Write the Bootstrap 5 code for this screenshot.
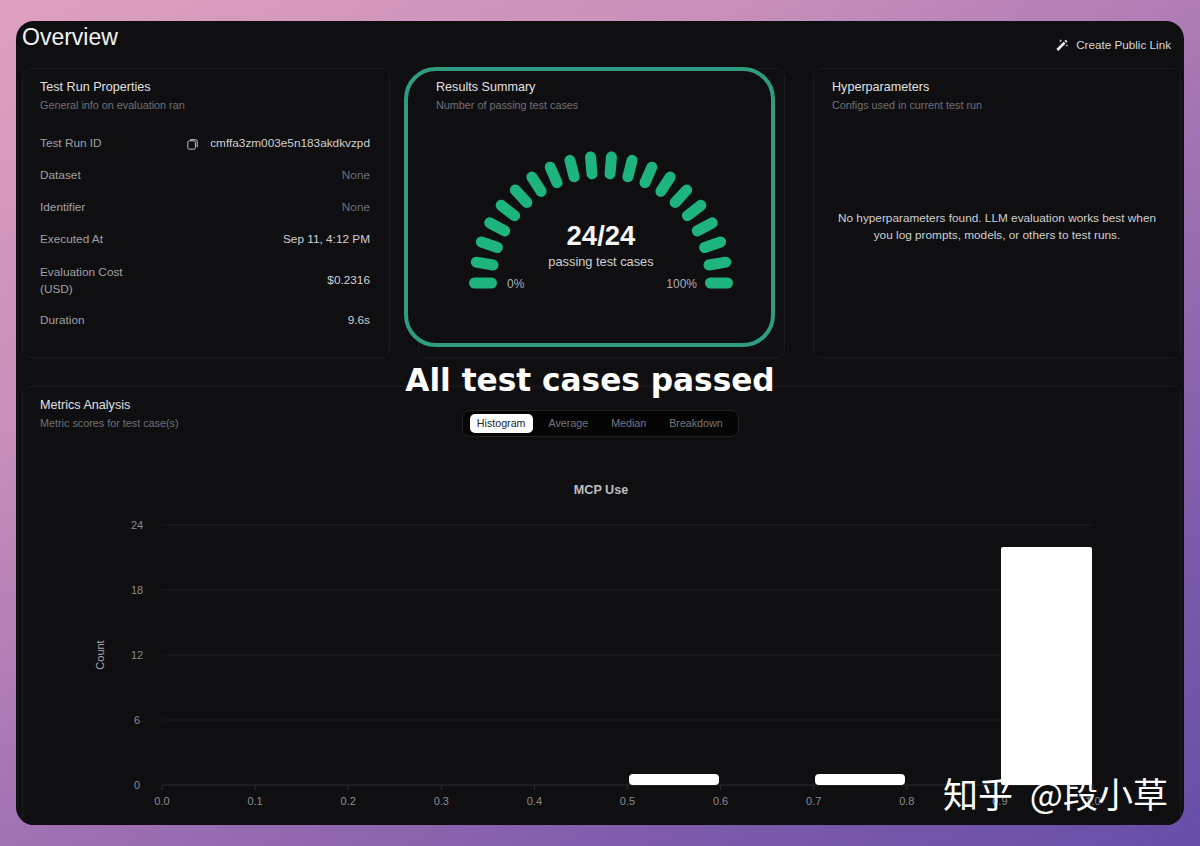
<!DOCTYPE html>
<html lang="en">

<head>
    <meta charset="UTF-8">
    <meta name="viewport" content="width=device-width, initial-scale=1.0">
    <title>Test Run Overview</title>
    <link href="https://cdn.jsdelivr.net/npm/bootstrap@5.3.2/dist/css/bootstrap.min.css" rel="stylesheet">
    <script src="https://cdn.jsdelivr.net/npm/bootstrap@5.3.2/dist/js/bootstrap.bundle.min.js"></script>
    <style>
        html, body { height: 846px; overflow: hidden; }
        body {
            background: linear-gradient(150deg, #dda0be 0%, #c88fb9 28%, #a575b3 52%, #7f5cab 78%, #664ea7 100%);
            padding: 21px 16px;
            font-family: "Liberation Sans", Arial, sans-serif;
            color: #e6e6e8;
        }
        .panel-dark {
            position: relative;
            height: 804px;
            padding: 0 3px 0 6px;
            background: #0f0f12;
            border-radius: 18px;
            overflow: hidden;
        }
        .page-head { height: 47px; }
        .page-title { font-size: 23px; line-height: 32px; color: #f2f2f3; }
        .public-link { font-size: 11.7px; color: #d8d8da; margin: 16px 10px 0 0; line-height: 16px; }
        .top-cards { display: grid; grid-template-columns: 368px 367px 368px; column-gap: 28px; height: 290px; }
        .panel-card {
            background: #0f0f12;
            border: 1px solid #1b1b1f;
            border-radius: 8px;
            padding: 10px 19px 10px 17px;
            color: #e6e6e8;
        }
        .card-name { font-size: 12.6px; line-height: 16px; color: #e0e0e2; }
        .card-sub { font-size: 10.8px; line-height: 14px; margin-top: 3px; color: #707075; }
        .prop-list { margin-top: 16px; font-size: 11.8px; }
        .prop-row { min-height: 32px; color: #a0a0a4; }
        .prop-row.tall { min-height: 49px; line-height: 17px; }
        .prop-label { max-width: 95px; }
        .prop-value { color: #cfcfd1; }
        .prop-none { color: #6d6d72; }
        .hyper-card { padding-left: 18px; padding-right: 18px; }
        .hyper-body {
            height: 230px;
            font-size: 11.8px;
            line-height: 17px;
            color: #cfcfd1;
        }
        .result-layer { position: relative; z-index: 2; }
        .result-ring {
            position: absolute;
            left: -15px;
            top: -2px;
            width: 371px;
            height: 280px;
            z-index: 1;
            background: #0f0f12;
            border: 4px solid #2f9b80;
            border-radius: 32px;
        }
        .result-caption {
            position: absolute;
            left: -15px;
            top: 289px;
            width: 372px;
            z-index: 3;
            font-family: "DejaVu Sans", sans-serif;
            font-weight: 700;
            font-size: 31.2px;
            line-height: 44px;
            white-space: nowrap;
            text-align: center;
            color: #fff;
        }
        .gauge-svg { display: block; margin: 12px auto 0; }
        .metric-card { margin-top: 28px; height: 460px; }
        .metric-head { display: grid; grid-template-columns: 1fr auto 1fr; }
        .metric-tabs {
            margin-top: 13px;
            height: 27px;
            padding: 3px 4px 3px 7px;
            background: #050506;
            border: 1px solid #202024;
            border-radius: 8px;
            font-size: 10.7px;
        }
        .metric-tab { padding: 0 11.5px; line-height: 19px; height: 19px; color: #77777c; }
        .metric-tab.on { background: #fff; color: #26262a; border-radius: 5px; padding: 0 7px; margin-right: 4.5px; }
        .chart-svg { display: block; margin: 3px 0 0 -17px; }
        .chart-svg text { font-family: "Liberation Sans", Arial, sans-serif; }
        .mark-zhihu {
            position: absolute;
            left: 927px;
            top: 748px;
            font-family: "Noto Sans CJK SC", "Liberation Sans", sans-serif;
            font-size: 35px;
            line-height: 48px;
            word-spacing: 9px;
            color: #fff;
            white-space: nowrap;
        }
    </style>
</head>

<body>
    <div class="panel-dark">
        <div class="page-head d-flex justify-content-between align-items-start">
            <div class="page-title">Overview</div>
            <div class="public-link d-flex align-items-center gap-2">
                <svg width="12" height="12" viewBox="0 0 12 12" fill="none">
                    <path d="M1.3 11 L8.6 3.6" stroke="#f2f2f2" stroke-width="2.6" />
                    <path d="M9.4 2.8 L10.6 1.6" stroke="#f2f2f2" stroke-width="2.6" />
                    <path d="M4.6 0.6 v2.4 M3.4 1.8 h2.4 M10.8 5.6 v1.8 M9.9 6.5 h1.8" stroke="#d8d8d8" stroke-width="0.7" />
                </svg>
                <span>Create Public Link</span>
            </div>
        </div>

        <div class="top-cards">
            <!-- Test run properties -->
            <div class="panel-card">
                <div class="card-name">Test Run Properties</div>
                <div class="card-sub">General info on evaluation ran</div>
                <div class="prop-list">
                    <div class="prop-row d-flex justify-content-between align-items-center">
                        <span>Test Run ID</span>
                        <span class="prop-value d-flex align-items-center gap-2">
                            <svg class="me-1" width="11" height="11" viewBox="0 0 11 11" fill="none" stroke="#c4c4c6" stroke-width="1">
                                <rect x="0.8" y="1.8" width="7.6" height="8.4" rx="1.6" />
                                <path d="M3 0.7 h5.6 a1.6 1.6 0 0 1 1.6 1.6 v6" />
                            </svg>
                            cmffa3zm003e5n183akdkvzpd
                        </span>
                    </div>
                    <div class="prop-row d-flex justify-content-between align-items-center">
                        <span>Dataset</span><span class="prop-none">None</span>
                    </div>
                    <div class="prop-row d-flex justify-content-between align-items-center">
                        <span>Identifier</span><span class="prop-none">None</span>
                    </div>
                    <div class="prop-row d-flex justify-content-between align-items-center">
                        <span>Executed At</span><span class="prop-value">Sep 11, 4:12 PM</span>
                    </div>
                    <div class="prop-row tall d-flex justify-content-between align-items-center">
                        <span class="prop-label">Evaluation Cost (USD)</span><span class="prop-value">$0.2316</span>
                    </div>
                    <div class="prop-row d-flex justify-content-between align-items-center">
                        <span>Duration</span><span class="prop-value">9.6s</span>
                    </div>
                </div>
            </div>

            <!-- Results summary with highlight -->
            <div class="panel-card position-relative">
                <div class="result-ring"></div>
                <div class="result-layer">
                    <div class="card-name">Results Summary</div>
                    <div class="card-sub">Number of passing test cases</div>
                    <svg class="gauge-svg" id="gauge" width="300" height="190" viewBox="451 124 300 190"></svg>
                </div>
                <div class="result-caption">All test cases passed</div>
            </div>

            <!-- Hyperparameters -->
            <div class="panel-card hyper-card">
                <div class="card-name">Hyperparameters</div>
                <div class="card-sub">Configs used in current test run</div>
                <div class="hyper-body d-flex align-items-center text-center">
                    <div>No hyperparameters found. LLM evaluation works best when you log prompts, models, or others to test runs.</div>
                </div>
            </div>
        </div>

        <!-- Metrics analysis -->
        <div class="panel-card metric-card">
            <div class="metric-head">
                <div>
                    <div class="card-name">Metrics Analysis</div>
                    <div class="card-sub">Metric scores for test case(s)</div>
                </div>
                <div class="metric-tabs d-flex">
                    <span class="metric-tab on">Histogram</span>
                    <span class="metric-tab">Average</span>
                    <span class="metric-tab">Median</span>
                    <span class="metric-tab">Breakdown</span>
                </div>
            </div>
            <svg class="chart-svg" id="chart" width="1157" height="400" viewBox="23 440 1157 400"></svg>
        </div>

        <div class="mark-zhihu">知乎 @段小草</div>
    </div>

    <script>
        const NS = "http://www.w3.org/2000/svg";

        function add(parent, tag, attrs, text) {
            const el = document.createElementNS(NS, tag);
            for (const k in attrs) el.setAttribute(k, attrs[k]);
            if (text !== undefined) el.textContent = text;
            parent.appendChild(el);
            return el;
        }

        // Gauge: 20 segments over the half circle
        const gauge = document.getElementById("gauge");
        const cx = 601, cy = 283;
        for (let i = 0; i < 20; i++) {
            const a = Math.PI - i * Math.PI / 19;
            add(gauge, "line", {
                x1: cx + 109.5 * Math.cos(a), y1: cy - 109.5 * Math.sin(a),
                x2: cx + 126.5 * Math.cos(a), y2: cy - 126.5 * Math.sin(a),
                stroke: "#1db47e", "stroke-width": 11, "stroke-linecap": "round"
            });
        }
        add(gauge, "text", { x: 601, y: 245, "text-anchor": "middle", fill: "#f5f5f5", "font-size": 27.5, "font-weight": 700 }, "24/24");
        add(gauge, "text", { x: 601, y: 266, "text-anchor": "middle", fill: "#d0d0d2", "font-size": 12.8 }, "passing test cases");
        add(gauge, "text", { x: 507, y: 288, fill: "#adadb1", "font-size": 12 }, "0%");
        add(gauge, "text", { x: 697, y: 288, "text-anchor": "end", fill: "#adadb1", "font-size": 12 }, "100%");

        // Histogram
        const chart = document.getElementById("chart");
        add(chart, "text", { x: 601, y: 494, "text-anchor": "middle", fill: "#bdbdc0", "font-size": 12.6, "font-weight": 700 }, "MCP Use");
        [[24, 525], [18, 590], [12, 655], [6, 720], [0, 785]].forEach(([v, y]) => {
            add(chart, "line", { x1: 162, x2: 1093, y1: y, y2: y, stroke: v === 0 ? "#2c2c30" : "#1f1f23" });
            add(chart, "text", { x: 137, y: y + 4, "text-anchor": "middle", fill: "#8a8a8e", "font-size": 11 }, v);
        });
        for (let i = 0; i <= 10; i++) {
            const x = 162 + i * 93.1;
            add(chart, "line", { x1: x, x2: x, y1: 785, y2: 790, stroke: "#2c2c30" });
            add(chart, "text", { x: x, y: 805, "text-anchor": "middle", fill: "#8a8a8e", "font-size": 11 }, (i / 10).toFixed(1));
        }
        add(chart, "text", { x: 0, y: 0, transform: "translate(104 655) rotate(-90)", "text-anchor": "middle", fill: "#a8a8ac", "font-size": 11 }, "Count");
        [[629, 774, 90, 4], [815, 774, 90, 4], [1001, 547, 91, 2]].forEach(([x, y, w, r]) => {
            add(chart, "rect", { x: x, y: y, width: w, height: 785 - y, rx: r, fill: "#fff" });
        });
    </script>
</body>

</html>
